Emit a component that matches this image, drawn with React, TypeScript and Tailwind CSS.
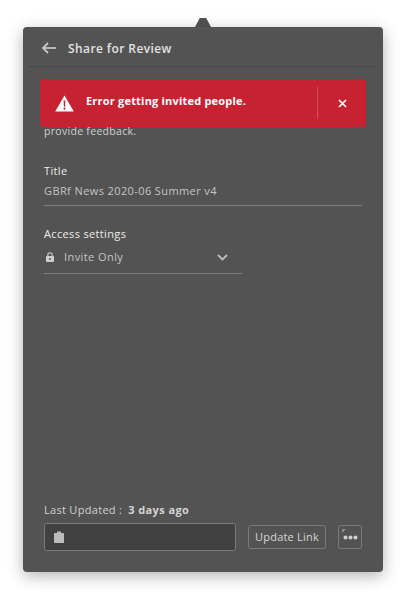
import React from "react";

export default function App() {
  return (
    <div className="w-[406px] h-[599px] bg-white overflow-hidden font-['Open_Sans',sans-serif] pt-[18px] pl-[23px]">
      <div className="w-[360px] flex justify-center h-[9px]">
        <div className="w-[16px] h-[9px] bg-[#535353] [clip-path:polygon(30%_0,70%_0,100%_100%,0_100%)]" />
      </div>
      <div className="relative w-[360px] h-[545px] bg-[#535353] rounded-[4px] shadow-[0_4px_16px_rgba(0,0,0,0.3)] flex flex-col">
        <div className="mx-[5px] h-[40px] border-b border-[#484848] flex items-center pl-[13px] gap-[11px] shrink-0">
          <svg className="mt-[3px]" width="16" height="12" viewBox="0 0 16 12" fill="none" stroke="#c4c4c4" strokeWidth="1.8">
            <path d="M15 6H2" />
            <path d="M7 1L2 6l5 5" />
          </svg>
          <span className="mt-[5px] text-[12px] font-semibold tracking-[0.4px] text-[#e2e2e2]">Share for Review</span>
        </div>

        <div className="absolute left-[17px] top-[52px] w-[326px] h-[48px] rounded-[3px] bg-[#c62232] flex items-center text-white">
          <svg className="ml-[15px]" width="19" height="17" viewBox="0 0 19 17">
            <path d="M9.5 0.5L18.8 16.5H0.2Z" fill="#fff" />
            <path d="M8.6 5.5h1.8l-.3 6.2H8.9z" fill="#c62232" />
            <circle cx="9.5" cy="13.6" r="1.05" fill="#c62232" />
          </svg>
          <span className="ml-[12px] -mt-[4px] text-[11px] font-bold tracking-[0.2px] whitespace-nowrap w-[231px]">Error getting invited people.</span>
          <div className="w-px h-[32px] bg-[#d94b58]" />
          <svg className="ml-[20px]" width="9" height="9" viewBox="0 0 9 9" stroke="#fff" strokeWidth="1.7" fill="none">
            <path d="M1 1l7 7M8 1L1 8" />
          </svg>
        </div>

        <div className="flex-1 flex flex-col px-[21px]">
          <p className="mt-[57px] text-[10.5px] leading-[14px] tracking-[0.3px] text-[#d0d0d0]">provide feedback.</p>

          <label className="mt-[26px] text-[11px] leading-[14px] tracking-[0.35px] text-[#ececec]">Title</label>
          <div className="mt-[6px] h-[22px] border-b border-[#7d7d7d] text-[11px] leading-[14px] tracking-[0.4px] text-[#c4c4c4] w-[318px]">GBRf News 2020-06 Summer v4</div>

          <label className="mt-[21px] text-[11px] leading-[14px] tracking-[0.35px] text-[#ececec]">Access settings</label>
          <div className="mt-[6px] h-[27px] w-[198px] border-b border-[#7d7d7d] flex items-start pt-[3px] text-[#c4c4c4]">
            <svg className="ml-[2px] mt-[2px]" width="8" height="10" viewBox="0 0 8 10">
              <path d="M1.8 4.2V2.9a2.2 2.2 0 0 1 4.4 0v1.3" fill="none" stroke="#cfcfcf" strokeWidth="1.1" />
              <rect x="0" y="4" width="8" height="6" rx="0.8" fill="#cfcfcf" />
              <circle cx="4" cy="7" r="0.9" fill="#535353" />
            </svg>
            <span className="ml-[10px] text-[11px] leading-[14px] tracking-[0.42px] flex-1">Invite Only</span>
            <svg className="mr-[14px] mt-[4px]" width="11" height="7" viewBox="0 0 11 7" fill="none" stroke="#bdbdbd" strokeWidth="1.8">
              <path d="M1 1l4.5 4.5L10 1" />
            </svg>
          </div>

          <div className="mt-auto pb-[21px]">
            <div className="translate-y-[1px] text-[11px] leading-[14px] tracking-[0.3px] text-[#d0d0d0]">
              Last Updated :<span className="ml-[6px] font-bold text-[#d4d4d4] tracking-[0.4px]">3 days ago</span>
            </div>
            <div className="mt-[7px] flex items-center w-[318px]">
              <div className="w-[192px] h-[28px] rounded-[3px] border border-[#7a7a7a] bg-[#414141] flex items-center pl-[9px]">
                <svg width="10" height="12" viewBox="0 0 10 12">
                  <rect x="0" y="2" width="10" height="10" rx="0.8" fill="#bcbcbc" />
                  <rect x="3" y="0.5" width="4" height="2.6" fill="#bcbcbc" />
                </svg>
              </div>
              <button className="ml-[12px] w-[78px] h-[24px] rounded-[3px] border border-[#7a7a7a] text-[11px] tracking-[0.2px] text-[#d6d6d6] flex items-center justify-center">Update Link</button>
              <button className="relative ml-[12px] w-[24px] h-[24px] rounded-[3px] border border-[#7a7a7a] flex items-center justify-center">
                <span className="absolute left-[3px] top-[3px] w-0 h-0 border-t-[4px] border-r-[4px] border-t-[#8c8c8c] border-r-transparent" />
                <svg width="15" height="5" viewBox="0 0 15 5" fill="#cfcfcf">
                  <circle cx="2.5" cy="2.5" r="2" />
                  <circle cx="7.5" cy="2.5" r="2" />
                  <circle cx="12.5" cy="2.5" r="2" />
                </svg>
              </button>
            </div>
          </div>
        </div>
      </div>
    </div>
  );
}
